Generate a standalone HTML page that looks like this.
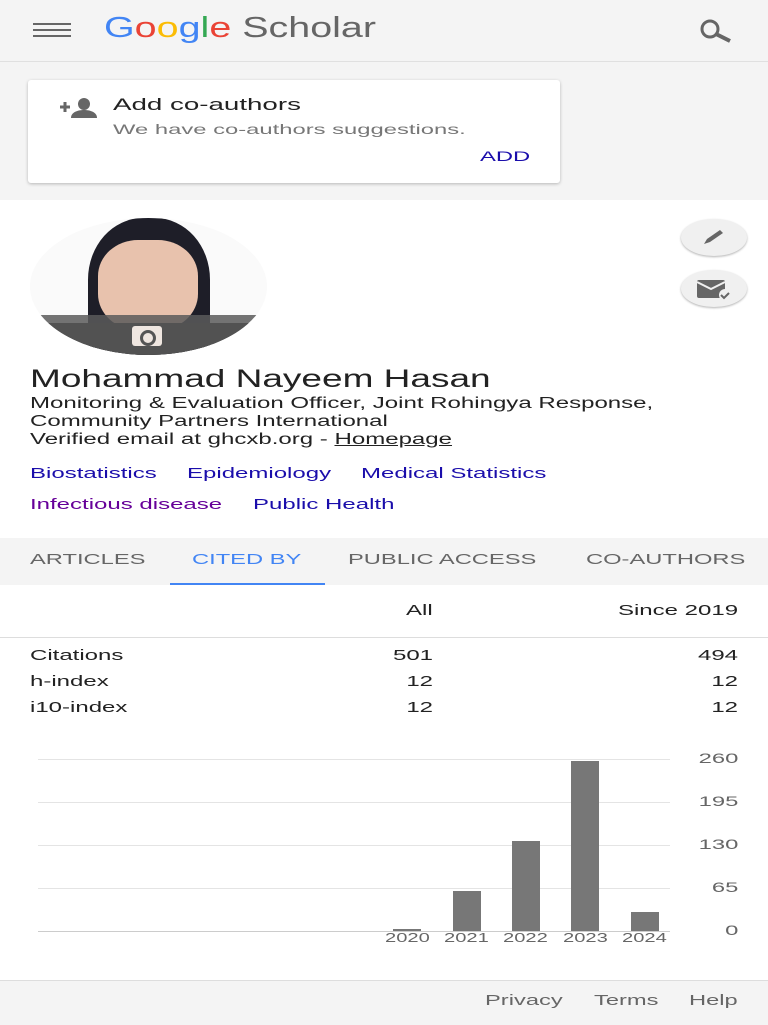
<!DOCTYPE html><html><head><meta charset="utf-8"><style>
body{margin:0;width:768px;height:1024px;position:relative;overflow:hidden;font-family:"Liberation Sans",sans-serif;background:#fff;color:#222}
.a{position:absolute;white-space:nowrap}
.s{display:inline-block;transform-origin:0 0;transform:scaleX(1.6)}
.r .s{transform-origin:100% 0}
.r{text-align:right}
.grid{position:absolute;left:38px;width:632px;height:1px;background:#e4e4e4}
.bar{position:absolute;background:#777;width:28px}
</style></head><body>
<div class="a" style="left:0;top:0;width:768px;height:200px;background:#f4f4f4"></div>
<div class="a" style="left:0;top:61px;width:768px;height:1px;background:#e0e0e0"></div>
<div class="a" style="left:33px;top:23px;width:38px;height:2px;background:#666;box-shadow:0 6px 0 #666,0 12px 0 #666"></div>
<div class="a" style="left:104px;top:12px;font-size:29px"><span class="s" style="transform:scaleX(1.36)"><span style="color:#4285f4">G</span><span style="color:#ea4335">o</span><span style="color:#fbbc05">o</span><span style="color:#4285f4">g</span><span style="color:#34a853">l</span><span style="color:#ea4335">e</span> <span style="color:#666">Scholar</span></span></div>
<svg class="a" style="left:698px;top:18px" width="36" height="26" viewBox="0 0 36 26"><circle cx="12" cy="11" r="8" fill="none" stroke="#666" stroke-width="3"/><path d="M18 16 L32 23" stroke="#666" stroke-width="4"/></svg>
<div class="a" style="left:28px;top:80px;width:532px;height:103px;background:#fff;border-radius:3px;box-shadow:0 1px 3px rgba(0,0,0,.25)"></div>
<svg class="a" style="left:58px;top:97px" width="40" height="22" viewBox="0 0 40 22"><path d="M2 10h10M7 5v10" stroke="#666" stroke-width="3"/><ellipse cx="26" cy="7" rx="6" ry="6" fill="#666"/><path d="M13 21c0-6 7-8 13-8s13 2 13 8z" fill="#666"/></svg>
<div class="a" style="left:113px;top:95px;font-size:17px;color:#222"><span class="s" style="transform:scaleX(1.63)">Add co-authors</span></div>
<div class="a" style="left:113px;top:121px;font-size:14px;color:#777"><span class="s" style="transform:scaleX(1.7)">We have co-authors suggestions.</span></div>
<div class="a" style="left:480px;top:148px;font-size:14px;color:#1a0dab"><span class="s" style="transform:scaleX(1.7)">ADD</span></div>
<div class="a" style="left:30px;top:218px;width:237px;height:137px;border-radius:50%;overflow:hidden;background:#fafafa">
<div class="a" style="left:58px;top:0;width:122px;height:137px;background:#1e1e28;border-radius:45% 45% 0 0"></div>
<div class="a" style="left:68px;top:22px;width:100px;height:90px;background:#e8c2ad;border-radius:40%"></div>
<div class="a" style="left:10px;top:105px;width:220px;height:40px;background:#222"></div>
<div class="a" style="left:0;top:97px;width:237px;height:40px;background:rgba(90,90,90,.85)"></div>
<div class="a" style="left:102px;top:108px;width:30px;height:20px;background:#efe6e0;border-radius:3px"></div>
<div class="a" style="left:110px;top:112px;width:10px;height:10px;border:3px solid #555;border-radius:50%"></div>
</div>
<div class="a" style="left:681px;top:219px;width:66px;height:37px;border-radius:50%;background:#f0f0f0;box-shadow:0 1px 2px rgba(0,0,0,.3)"></div>
<svg class="a" style="left:700px;top:227px" width="26" height="20"><path d="M4 17l3-5 13-9 3 3-13 9z" fill="#666"/></svg>
<div class="a" style="left:681px;top:270px;width:66px;height:37px;border-radius:50%;background:#f0f0f0;box-shadow:0 1px 2px rgba(0,0,0,.3)"></div>
<svg class="a" style="left:695px;top:278px" width="40" height="24"><rect x="2" y="2" width="28" height="18" rx="2" fill="#666"/><path d="M2 4l14 7 14-7" stroke="#f0f0f0" stroke-width="2" fill="none"/><circle cx="30" cy="17" r="6" fill="#f0f0f0"/><path d="M26 17l3 3 5-5" stroke="#666" stroke-width="2" fill="none"/></svg>
<div class="a" style="left:30px;top:365px;font-size:25px;color:#222"><span class="s" style="transform:scaleX(1.48)">Mohammad Nayeem Hasan</span></div>
<div class="a" style="left:30px;top:395px;font-size:15.5px;line-height:18px;color:#222"><span class="s" style="transform:scaleX(1.55)">Monitoring &amp; Evaluation Officer, Joint Rohingya Response,<br>Community Partners International<br>Verified email at ghcxb.org - <u>Homepage</u></span></div>
<div class="a" style="left:30px;top:465px;font-size:15px;color:#1a0dab"><span class="s">Biostatistics</span></div>
<div class="a" style="left:187px;top:465px;font-size:15px;color:#1a0dab"><span class="s">Epidemiology</span></div>
<div class="a" style="left:361px;top:465px;font-size:15px;color:#1a0dab"><span class="s">Medical Statistics</span></div>
<div class="a" style="left:30px;top:496px;font-size:15px;color:#660099"><span class="s">Infectious disease</span></div>
<div class="a" style="left:253px;top:496px;font-size:15px;color:#1a0dab"><span class="s">Public Health</span></div>
<div class="a" style="left:0;top:538px;width:768px;height:47px;background:#f4f4f4"></div>
<div class="a" style="left:170px;top:583px;width:155px;height:2px;background:#4285f4"></div>
<div class="a" style="left:30px;top:551px;font-size:15px;color:#666"><span class="s" style="transform:scaleX(1.58)">ARTICLES</span></div>
<div class="a" style="left:192px;top:551px;font-size:15px;color:#4285f4"><span class="s" style="transform:scaleX(1.58)">CITED BY</span></div>
<div class="a" style="left:348px;top:551px;font-size:15px;color:#666"><span class="s" style="transform:scaleX(1.58)">PUBLIC ACCESS</span></div>
<div class="a" style="left:586px;top:551px;font-size:15px;color:#666"><span class="s" style="transform:scaleX(1.58)">CO-AUTHORS</span></div>
<div class="a r" style="right:335px;top:602px;font-size:15px"><span class="s">All</span></div>
<div class="a r" style="right:30px;top:602px;font-size:15px"><span class="s">Since 2019</span></div>
<div class="a" style="left:0;top:637px;width:768px;height:1px;background:#ddd"></div>
<div class="a" style="left:30px;top:643px;font-size:15px;line-height:26px"><span class="s">Citations<br>h-index<br>i10-index</span></div>
<div class="a r" style="right:335px;top:643px;font-size:15px;line-height:26px"><span class="s">501<br>12<br>12</span></div>
<div class="a r" style="right:30px;top:643px;font-size:15px;line-height:26px"><span class="s">494<br>12<br>12</span></div>
<div class="grid" style="top:759px"></div><div class="grid" style="top:802px"></div><div class="grid" style="top:845px"></div><div class="grid" style="top:888px"></div><div class="grid" style="top:931px;background:#ccc"></div>
<div class="bar" style="left:393px;top:929px;height:2px"></div>
<div class="bar" style="left:453px;top:891px;height:40px"></div>
<div class="bar" style="left:512px;top:841px;height:90px"></div>
<div class="bar" style="left:571px;top:761px;height:170px"></div>
<div class="bar" style="left:631px;top:912px;height:19px"></div>
<div class="a" style="left:385px;top:930px;font-size:13px;color:#666"><span class="s" style="transform:scaleX(1.55)">2020</span></div>
<div class="a" style="left:444px;top:930px;font-size:13px;color:#666"><span class="s" style="transform:scaleX(1.55)">2021</span></div>
<div class="a" style="left:503px;top:930px;font-size:13px;color:#666"><span class="s" style="transform:scaleX(1.55)">2022</span></div>
<div class="a" style="left:563px;top:930px;font-size:13px;color:#666"><span class="s" style="transform:scaleX(1.55)">2023</span></div>
<div class="a" style="left:622px;top:930px;font-size:13px;color:#666"><span class="s" style="transform:scaleX(1.55)">2024</span></div>
<div class="a r" style="right:30px;top:737px;font-size:14px;color:#666;line-height:43px"><span class="s" style="transform:scaleX(1.7)">260<br>195<br>130<br>65<br>0</span></div>
<div class="a" style="left:0;top:980px;width:768px;height:44px;background:#f4f4f4;border-top:1px solid #ddd"></div>
<div class="a" style="left:485px;top:992px;font-size:15px;color:#666"><span class="s" style="transform:scaleX(1.58)">Privacy</span></div>
<div class="a" style="left:594px;top:992px;font-size:15px;color:#666"><span class="s" style="transform:scaleX(1.58)">Terms</span></div>
<div class="a" style="left:689px;top:992px;font-size:15px;color:#666"><span class="s" style="transform:scaleX(1.58)">Help</span></div>
</body></html>
